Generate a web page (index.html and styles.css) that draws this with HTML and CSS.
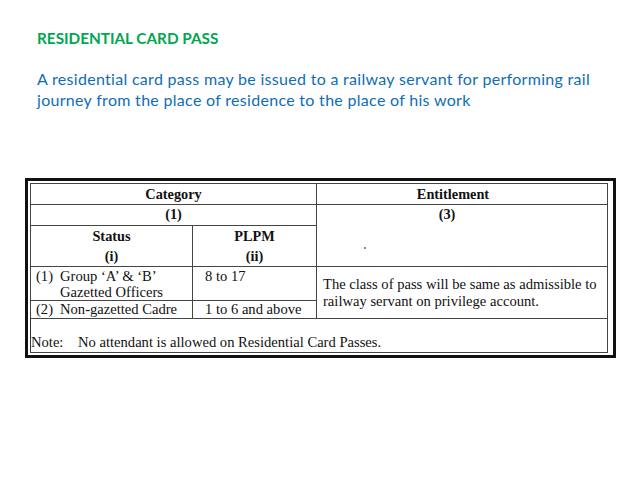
FILE: index.html
```html
<!DOCTYPE html>
<html>
<head>
<meta charset="utf-8">
<link rel="stylesheet" href="styles.css">
</head>
<body>
<div class="slide">
  <div class="intro">
    <h1 class="title">RESIDENTIAL CARD PASS</h1>
    <p class="lead">A residential card pass may be issued to a railway servant for performing rail<br>journey from the place of residence to the place of his work</p>
  </div>
  <div class="frame">
    <table class="rules">
      <colgroup>
        <col class="c1"><col class="c2"><col class="c3">
      </colgroup>
      <tr class="r-head">
        <th colspan="2">Category</th>
        <th class="ent-head">Entitlement</th>
      </tr>
      <tr class="r-num">
        <th colspan="2">(1)</th>
        <th rowspan="2" class="ent-num"><div>(3)</div><span class="dot"></span></th>
      </tr>
      <tr class="r-sub">
        <th>Status<br>(i)</th>
        <th>PLPM<br>(ii)</th>
      </tr>
      <tr class="r-one">
        <td class="status"><span class="n">(1)</span><span class="t">Group ‘A’ &amp; ‘B’<br>Gazetted Officers</span></td>
        <td class="plpm">8 to 17</td>
        <td rowspan="2" class="ent">The class of pass will be same as admissible to<br>railway servant on privilege account.</td>
      </tr>
      <tr class="r-two">
        <td class="status"><span class="n">(2)</span><span class="t">Non-gazetted Cadre</span></td>
        <td class="plpm">1 to 6 and above</td>
      </tr>
      <tr class="r-note">
        <td colspan="3" class="note"><span class="nl">Note:</span>No attendant is allowed on Residential Card Passes.</td>
      </tr>
    </table>
  </div>
</div>
</body>
</html>
```
FILE: styles.css
```css
html, body {
  margin: 0;
  padding: 0;
  background: #ffffff;
}
.slide {
  width: 638px;
  height: 478px;
  overflow: hidden;
}
.intro {
  padding: 28px 0 0 37px;
  font-family: Lato, "Open Sans", sans-serif;
}
.title {
  margin: 0;
  font-size: 15.3px;
  font-weight: 700;
  color: #00a650;
  line-height: 20px;
}
.lead {
  margin: 20px 0 0 0;
  font-size: 16px;
  line-height: 21px;
  color: #0f6db8;
  letter-spacing: 0.3px;
  white-space: nowrap;
}
.frame {
  margin: 68px 0 0 25px;
  width: 581px;
  border: 3px solid #111;
  padding: 2px;
  background: #fff;
}
.rules {
  border-collapse: collapse;
  width: 577px;
  border: 1px solid #333;
  font-family: "Liberation Serif", "Times New Roman", serif;
  font-size: 14.6px;
  color: #111;
  table-layout: fixed;
}
.c1 { width: 162px; }
.c2 { width: 124px; }
.c3 { width: 291px; }
.rules th, .rules td {
  border: 1px solid #444;
  padding: 0;
  vertical-align: top;
}
.rules th {
  font-weight: 700;
  font-size: 14.3px;
  text-align: center;
}
.r-head { height: 21px; }
.r-head th { line-height: 20px; }
.rules th.ent-head { padding-right: 18px; }
.r-num { height: 21px; }
.r-num th { line-height: 19px; }
.rules th.ent-num { position: relative; padding-right: 30px; }
.ent-num .dot {
  position: absolute;
  left: 47px;
  top: 42px;
  width: 2px;
  height: 2px;
  background: #666;
  border-radius: 1px;
}
.r-sub { height: 40px; }
.r-sub th { line-height: 20px; }
.r-one { height: 33px; }
.status { line-height: 16px; }
.status .n {
  display: inline-block;
  width: 24px;
  padding-left: 5px;
  vertical-align: top;
}
.status .t {
  display: inline-block;
  vertical-align: top;
}
.r-one td.status, .r-one td.plpm { padding-top: 1px; }
.rules td.plpm { padding-left: 12px; line-height: 16px; }
.r-two { height: 18px; }
.r-two td { line-height: 16px; }
.rules td.ent {
  vertical-align: middle;
  padding-left: 6px;
  line-height: 17px;
}
.r-note { height: 34px; }
.rules td.note {
  border-left: none;
  vertical-align: bottom;
  line-height: 18px;
  padding-bottom: 1px;
}
.note .nl {
  display: inline-block;
  width: 47px;
}
```
